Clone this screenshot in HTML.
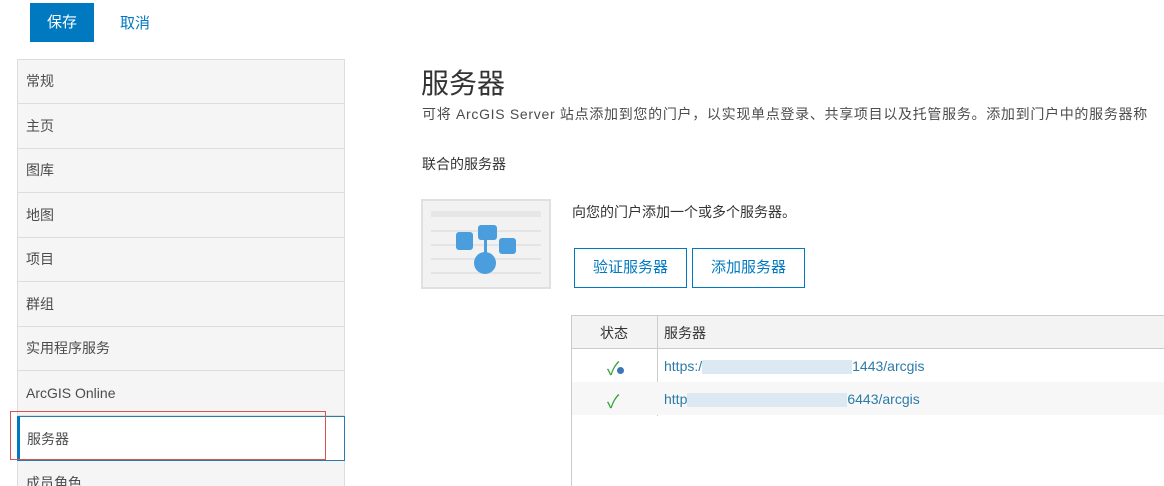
<!DOCTYPE html>
<html><head><meta charset="utf-8"><style>
*{margin:0;padding:0;box-sizing:border-box}
html,body{width:1164px;height:486px;overflow:hidden}
body{background:#fff;font-family:"Liberation Sans","Noto Sans CJK SC",sans-serif;color:#4c4c4c;position:relative;font-size:14px}
.a{position:absolute}
.side{left:17px;top:59px;width:328px;height:440px;background:#f5f5f5;border:1px solid #ddd}
.item{position:absolute;left:17px;width:328px;height:44.5px;border-bottom:1px solid #ddd;padding-left:9px;line-height:44px;font-size:14px;color:#4c4c4c}
.btn{position:absolute;top:248px;height:40px;border:1px solid #0079c1;color:#0079c1;font-size:15px;line-height:38px;text-align:center;background:#fff}
</style></head><body>
<div class="a" style="left:30px;top:3px;width:64px;height:39px;background:#0079c1;color:#fff;font-size:15px;line-height:39px;text-align:center">保存</div>
<div class="a" style="left:120px;top:12px;font-size:15px;color:#0079c1">取消</div>
<div class="a side"></div>
<div class="item" style="top:59px">常规</div>
<div class="item" style="top:104px">主页</div>
<div class="item" style="top:148px">图库</div>
<div class="item" style="top:193px">地图</div>
<div class="item" style="top:237px">项目</div>
<div class="item" style="top:282px">群组</div>
<div class="item" style="top:326px">实用程序服务</div>
<div class="item" style="top:371px">ArcGIS Online</div>
<div class="item" style="top:416px;background:#fff;border:1px solid #2b7ba8;border-left:3px solid #0079c1;padding-left:7px;height:45px;width:328px">服务器</div>
<div class="item" style="top:461px;border:none">成员角色</div>
<div class="a" style="left:10px;top:411px;width:316px;height:49px;border:1px solid #d9534f"></div>
<div class="a" style="left:421px;top:62px;font-size:28px;color:#333">服务器</div>
<div class="a" style="left:422px;top:104px;font-size:14px;white-space:nowrap;letter-spacing:0.7px">可将 ArcGIS Server 站点添加到您的门户，以实现单点登录、共享项目以及托管服务。添加到门户中的服务器称</div>
<div class="a" style="left:422px;top:154px;font-size:14px;color:#333">联合的服务器</div>
<div class="a" style="left:421px;top:199px;width:130px;height:90px;background:#f2f2f2;border:2px solid #e0e0e0">
<svg width="126" height="86" viewBox="0 0 126 86">
<rect x="8" y="10" width="110" height="6" fill="#e6e6e6"/>
<g stroke="#e4e4e4" stroke-width="2"><line x1="8" y1="30" x2="118" y2="30"/><line x1="8" y1="44" x2="118" y2="44"/><line x1="8" y1="58" x2="118" y2="58"/><line x1="8" y1="72" x2="118" y2="72"/></g>
<g fill="#4a9ede"><rect x="33" y="31" width="17" height="18" rx="3"/><rect x="55" y="24" width="19" height="15" rx="3"/><rect x="76" y="37" width="17" height="16" rx="3"/><circle cx="62" cy="62" r="11"/><rect x="61" y="39" width="3" height="14"/></g>
</svg></div>
<div class="a" style="left:572px;top:202px;font-size:14px;color:#333">向您的门户添加一个或多个服务器。</div>
<div class="btn" style="left:574px;width:113px">验证服务器</div>
<div class="btn" style="left:692px;width:113px">添加服务器</div>
<div class="a" style="left:571px;top:315px;width:600px;height:200px;border:1px solid #ccc">
<div class="a" style="left:0;top:0;width:600px;height:33px;background:#f3f3f3;border-bottom:1px solid #ccc"></div>
<div class="a" style="left:85px;top:0;width:1px;height:100px;background:#ccc"></div>
<div class="a" style="left:0;top:66px;width:600px;height:33px;background:#f7f7f7"></div>
<div class="a" style="left:28px;top:7px;color:#333">状态</div>
<div class="a" style="left:92px;top:7px;color:#333">服务器</div>
<div class="a" style="left:35px;top:39px;color:#35a33a;font-size:18px">✓<span style="display:inline-block;width:7px;height:7px;border-radius:50%;background:#3a76b8;vertical-align:middle;margin-left:-2px"></span></div>
<div class="a" style="left:35px;top:72px;color:#35a33a;font-size:18px">✓</div>
<div class="a" style="left:92px;top:42px;color:#2b7ba8">https:/<span style="display:inline-block;width:150px;height:14px;background:#dde9f2;vertical-align:middle"></span>1443/arcgis</div>
<div class="a" style="left:92px;top:75px;color:#2b7ba8">http<span style="display:inline-block;width:160px;height:14px;background:#dde9f2;vertical-align:middle"></span>6443/arcgis</div>
</div>
</body></html>
